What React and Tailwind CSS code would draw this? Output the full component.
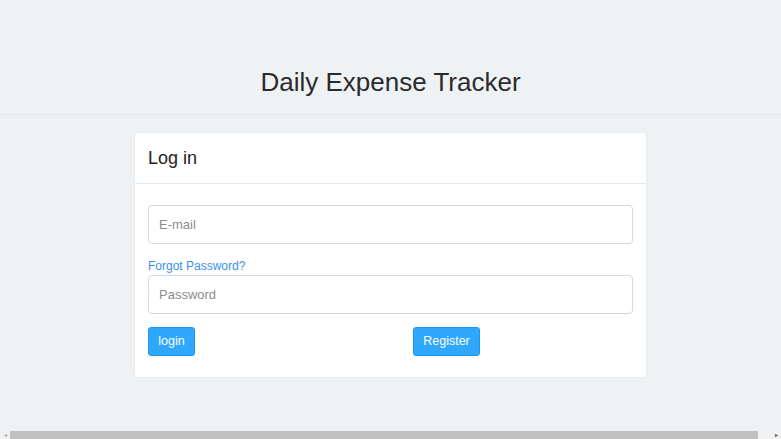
export default function App() {
  return (
    <div className="h-[439px] w-[781px] overflow-hidden bg-[#eff2f5] font-['Liberation_Sans',Arial,sans-serif] flex flex-col">
      <div className="flex-1">
        <header className="h-[115px] border-b border-[#e2e5e9] flex items-end justify-center pb-[17px]">
          <h1 className="text-[26px] leading-[30px] text-[#2b2b2b]">Daily Expense Tracker</h1>
        </header>

        <div className="mx-auto mt-[17px] w-[513px] bg-white rounded-[4px] border border-[#eaedf0]">
          <div className="h-[51px] flex items-center px-[13px] border-b border-[#e6e8ec]">
            <h2 className="text-[18px] text-[#222]">Log in</h2>
          </div>
          <div className="px-[13px] pt-[21px] pb-[21px]">
            <input
              type="text"
              placeholder="E-mail"
              className="w-full h-[39px] rounded-[4px] border border-[#d4d7db] px-[10px] text-[13px] text-[#333] placeholder:text-[#8d8d8d] outline-none"
            />
            <a href="#" className="block mt-[15px] text-[12px] leading-[15px] text-[#3c8fe6]">Forgot Password?</a>
            <input
              type="password"
              placeholder="Password"
              className="w-full mt-[1px] h-[39px] rounded-[4px] border border-[#d4d7db] px-[10px] text-[13px] text-[#333] placeholder:text-[#8d8d8d] outline-none"
            />
            <div className="mt-[13px] flex">
              <button className="h-[29px] w-[47px] rounded-[3px] bg-[#2ea7fd] border border-[#1e96ec] text-white text-[12.5px]">login</button>
              <button className="ml-[218px] h-[29px] w-[67px] rounded-[3px] bg-[#2ea7fd] border border-[#1e96ec] text-white text-[12.5px]">Register</button>
            </div>
          </div>
        </div>
      </div>

      <div className="h-[8px] bg-[#f1f1f1] flex items-center">
        <span className="w-[10px] text-[6px] leading-none text-[#a3a3a3] text-center">◂</span>
        <div className="h-[8px] w-[748px] bg-[#c1c1c1]" />
        <span className="flex-1 text-[6px] leading-none text-[#505050] text-right pr-[3px]">▸</span>
      </div>
    </div>
  );
}
